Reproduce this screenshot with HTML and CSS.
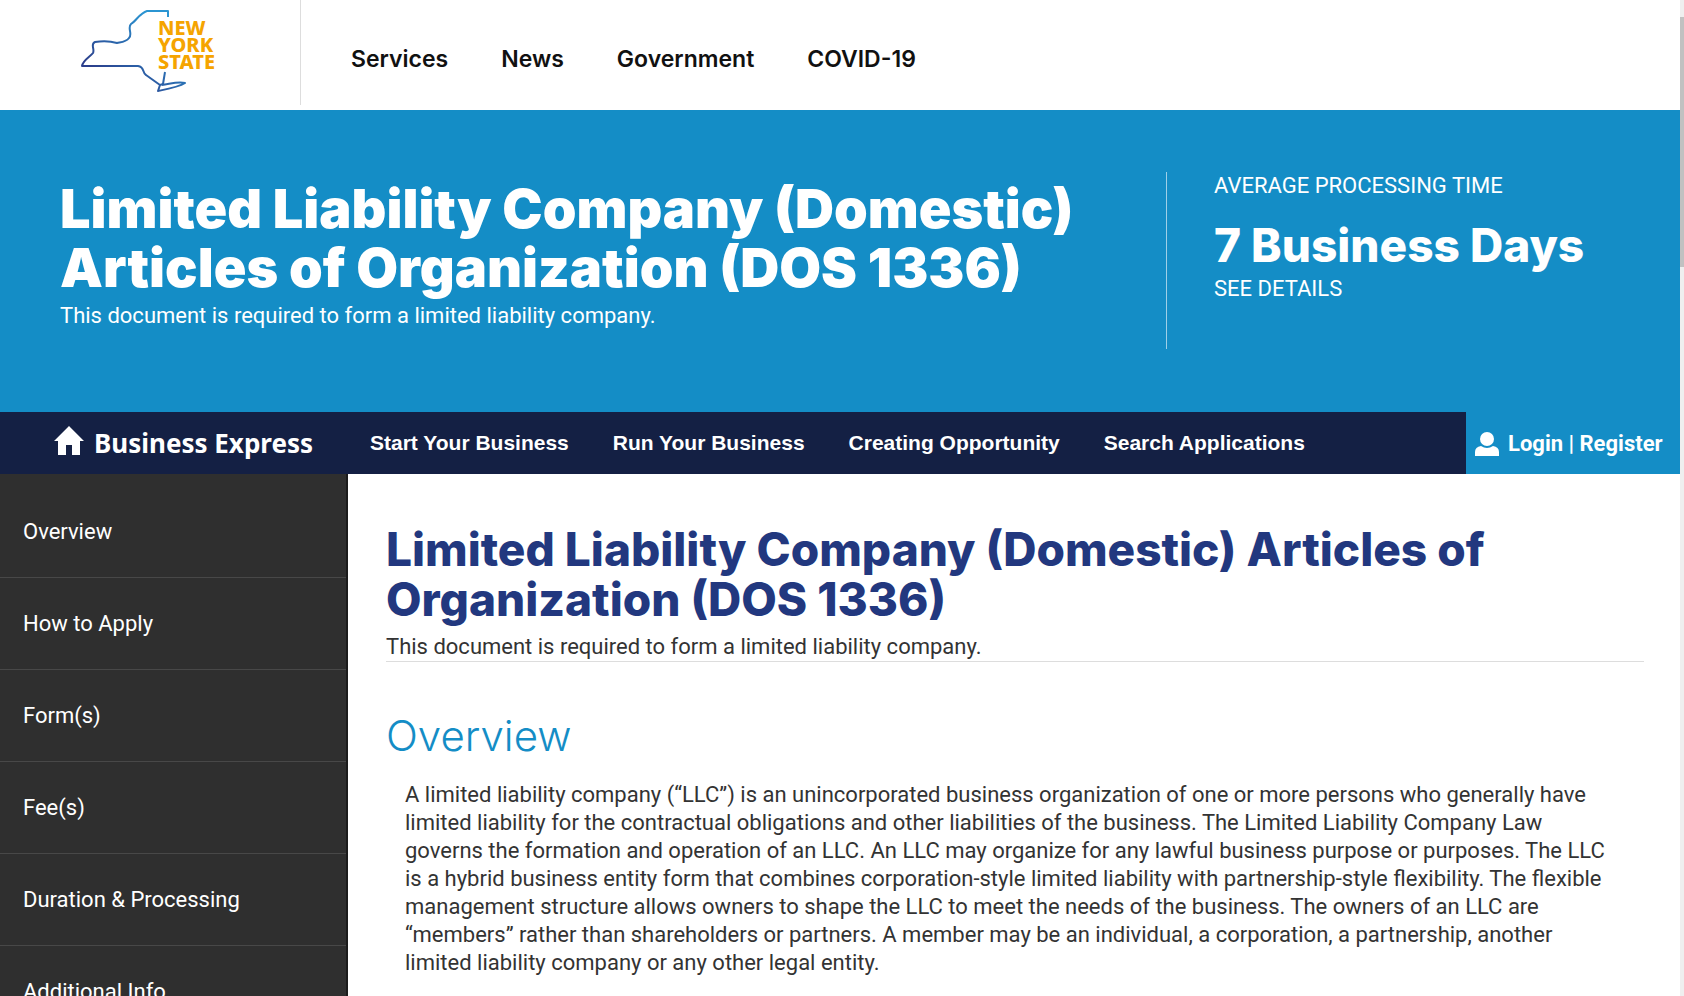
FILE: index.html
```
<!DOCTYPE html>
<html lang="en">
<head>
<meta charset="utf-8">
<title>Limited Liability Company (Domestic) Articles of Organization</title>
<link rel="stylesheet" href="styles.css">
</head>
<body>
<div class="page">
<header class="topbar">
  <a class="logo" href="#" aria-label="New York State">
    <svg class="logo-map" viewBox="0 0 138 92" aria-hidden="true">
      <defs>
        <linearGradient id="outline" x1="0" y1="1" x2="1" y2="0">
          <stop offset="0.2" stop-color="#2b3f8c"/>
          <stop offset="0.8" stop-color="#2b95d2"/>
        </linearGradient>
      </defs>
      <path d="M88 17V11H67C60 13 56 21 51 24C47 28 53 34 49 38C46 42 42 42 37 43C30 41 22 41 15 42C10 44 15 49 13 53C10 57 3 60 2 66H58C65 67 62 73 66 75L80 85M85 72L83 84L80 85L78 91C88 89 99 87 105 83C98 81 90 84 82 85" fill="none" stroke="url(#outline)" stroke-width="2" stroke-linejoin="round"/>
    </svg>
    <span class="logo-text">NEW<br>YORK<br>STATE</span>
  </a>
  <nav class="topnav" aria-label="State">
    <a href="#">Services</a><a href="#">News</a><a href="#">Government</a><a href="#">COVID-19</a>
  </nav>
</header>
<section class="hero">
  <div class="hero-main">
    <h1 class="hero-title">Limited Liability Company (Domestic) Articles of Organization (DOS 1336)</h1>
    <p class="lead">This document is required to form a limited liability company.</p>
  </div>
  <aside class="processing">
    <p class="lead">AVERAGE PROCESSING TIME</p>
    <p class="days">7 Business Days</p>
    <a class="lead" href="#">SEE DETAILS</a>
  </aside>
</section>
<div class="mainnav">
  <a class="brand" href="#">
    <svg class="home" viewBox="0 0 30 34" aria-hidden="true"><path d="M15 0L30 15H26V29H18V19H12V29H4V15H0Z"/></svg>
    Business Express
  </a>
  <nav class="links" aria-label="Business">
    <a href="#">Start Your Business</a><a href="#">Run Your Business</a><a href="#">Creating Opportunity</a><a href="#">Search Applications</a>
  </nav>
  <a class="login" href="#">
    <svg class="user" viewBox="0 0 24 24" aria-hidden="true"><circle cx="12" cy="7" r="7"/><path d="M0 24V20Q0 15 6 14Q12 18 18 14Q24 15 24 20V24Z"/></svg>
    Login | Register
  </a>
</div>
<div class="body">
  <nav class="sidebar" aria-label="Sections">
    <a href="#">Overview</a><a href="#">How to Apply</a><a href="#">Form(s)</a><a href="#">Fee(s)</a><a href="#">Duration &amp; Processing</a><a href="#">Additional Info</a>
  </nav>
  <main class="content">
    <h2 class="title">Limited Liability Company (Domestic) Articles of Organization (DOS 1336)</h2>
    <p class="lead summary">This document is required to form a limited liability company.</p>
    <h3 class="section">Overview</h3>
    <p class="text">A limited liability company (“LLC”) is an unincorporated business organization of one or more persons who generally have limited liability for the contractual obligations and other liabilities of the business. The Limited Liability Company Law governs the formation and operation of an LLC. An LLC may organize for any lawful business purpose or purposes. The LLC is a hybrid business entity form that combines corporation-style limited liability with partnership-style flexibility. The flexible management structure allows owners to shape the LLC to meet the needs of the business. The owners of an LLC are “members” rather than shareholders or partners. A member may be an individual, a corporation, a partnership, another limited liability company or any other legal entity.</p>
  </main>
</div>
</div>
<div class="scroll" aria-hidden="true"></div>
</body>
</html>
```
FILE: styles.css
```
* { box-sizing: border-box; }
body { margin: 0; height: 100vh; overflow: hidden; display: flex; background: #fff; font-family: Roboto, "Liberation Sans", sans-serif; font-size: 22px; line-height: 28px; color: #333; }
a { color: inherit; text-decoration: none; }
h1, h2, h3, p { margin: 0; }
.page { flex: 1; min-width: 0; display: flex; flex-direction: column; }
.scroll { width: 4px; background: linear-gradient(#efefef 17px, #c1c1c1 17px, #c1c1c1 267px, #efefef 267px); }
.topbar { display: flex; height: 110px; flex: none; padding-bottom: 5px; }
.logo { width: 301px; display: flex; padding-left: 80px; border-right: 1px solid #ddd; }
.logo-map { width: 138px; height: 92px; flex: none; }
.logo-text { margin-left: -60px; padding-top: 19px; font: 800 20px/17px "Noto Sans", sans-serif; color: #f5a400; }
.topnav { display: flex; align-items: center; gap: 53px; padding: 13px 0 0 50px; font: 600 23px/28px Inter, sans-serif; color: #111; }
.hero { display: flex; flex: none; background: #148dc6; color: #fff; height: 302px; padding-top: 62px; }
.hero-main { flex: 1; padding: 7px 40px 0 60px; }
.hero-title { font: 900 54px/59px Inter, sans-serif; margin-bottom: 5px; }
.lead { display: block; font-size: 22px; line-height: 28px; }
.processing { width: 514px; height: 177px; padding-left: 47px; border-left: 1px solid #9fd0e8; }
.days { font: 800 46px/60px Inter, sans-serif; margin: 15px 0 0; }
.mainnav { display: flex; flex: none; align-items: stretch; background: #142044; color: #fff; height: 62px; }
.brand, .login, .links { display: flex; align-items: center; }
.brand { width: 370px; padding-left: 54px; gap: 10px; font: 700 26px/30px "Noto Sans", sans-serif; }
.home { width: 30px; height: 34px; fill: #fff; }
.links { flex: 1; gap: 44px; font: 700 21px/24px "Liberation Sans", sans-serif; }
.login { width: 214px; padding: 2px 0 0 9px; gap: 9px; background: #148dc6; font-weight: 700; font-size: 22px; }
.user { width: 24px; height: 24px; fill: #fff; }
.body { display: flex; flex: 1; min-height: 0; }
.sidebar { width: 348px; flex: none; background: #2f2f2f; color: #fff; padding-top: 12px; border-right: 2px solid #1c1c1c; overflow: hidden; }
.sidebar a { display: flex; align-items: center; height: 92px; padding-left: 23px; border-bottom: 1px solid #484848; }
.content { flex: 1; padding: 50px 36px 0 38px; overflow: hidden; }
.title { font: 800 46px/50px Inter, sans-serif; color: #22387f; }
.summary { margin-top: 9px; border-bottom: 1px solid #ddd; }
.section { font: 300 42px/54px Inter, sans-serif; color: #148dc6; margin: 47px 0 18px; }
.text { padding: 0 26px 0 19px; line-height: 28px; }
```
